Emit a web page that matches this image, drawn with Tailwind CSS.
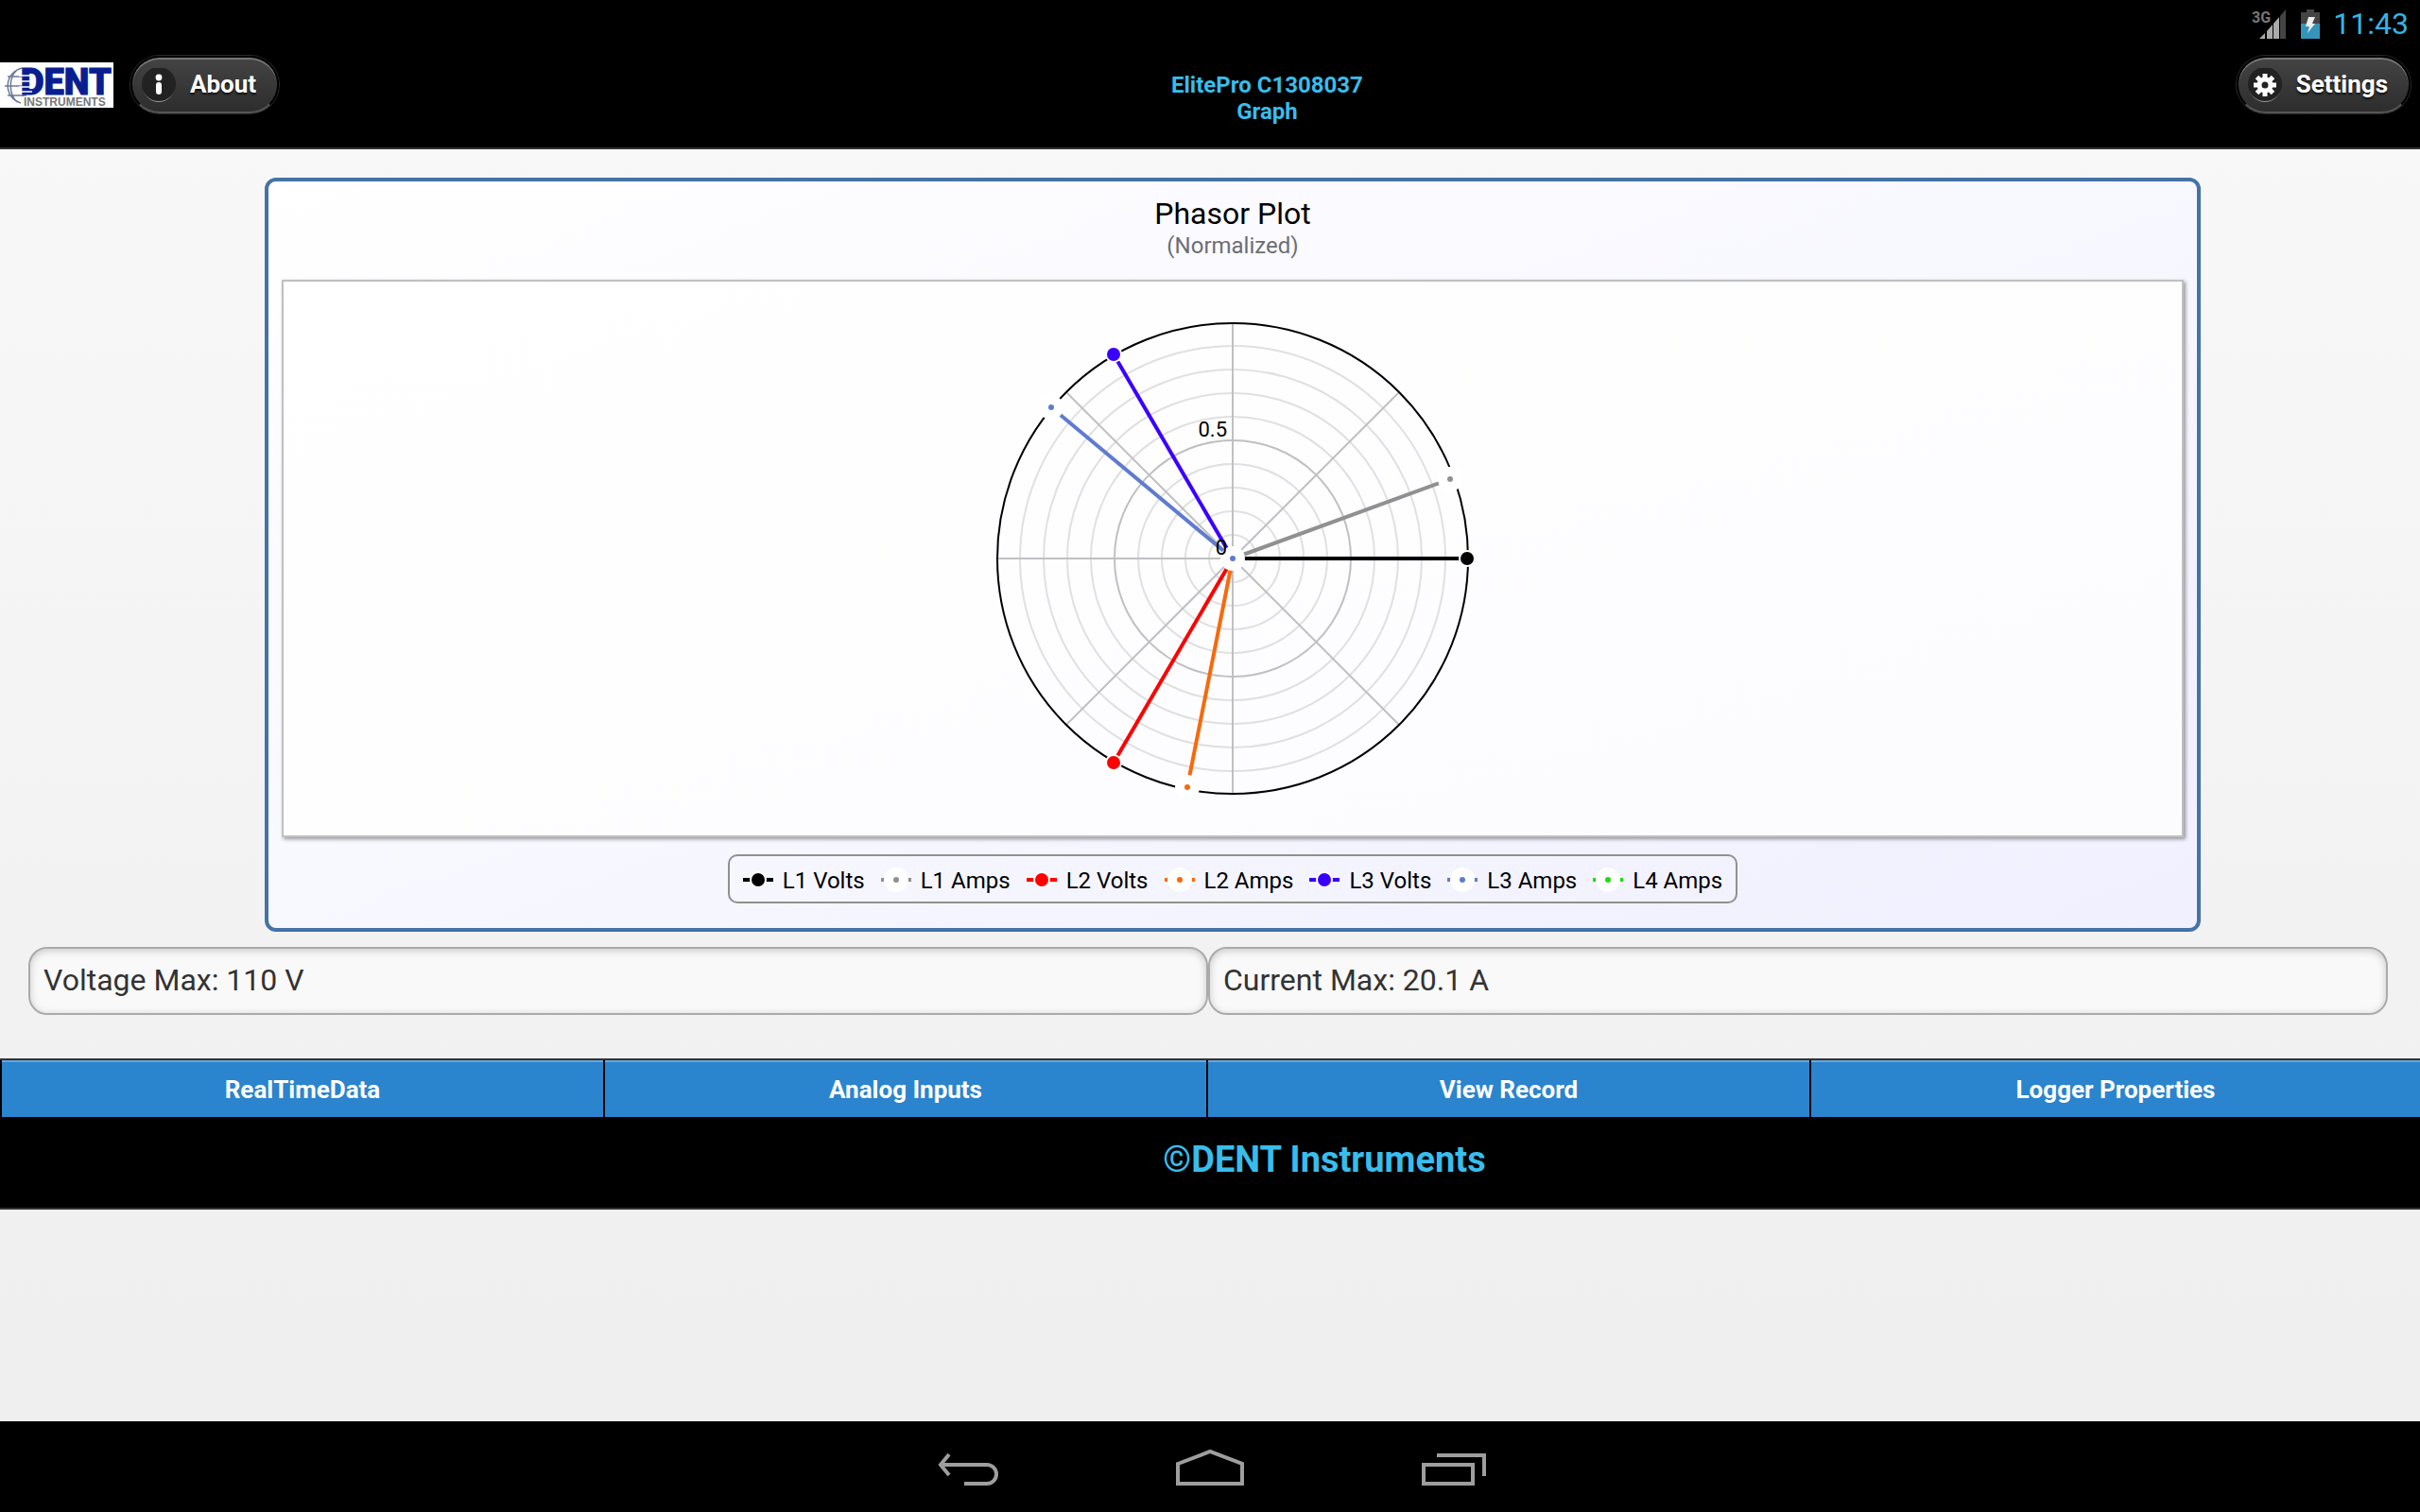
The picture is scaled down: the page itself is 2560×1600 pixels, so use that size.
<!DOCTYPE html>
<html lang="en">
<head>
<meta charset="utf-8">
<title>ElitePro Graph</title>
<script src="https://cdn.jsdelivr.net/npm/@tailwindcss/browser@4"></script>
</head>
<body class="font-[Roboto,sans-serif] bg-[#eee] text-black">
<div class="min-h-screen flex flex-col bg-linear-to-b from-[#f9f9f9] to-[#eee]">

  <!-- Android status bar -->
  <div class="h-[50px] bg-black flex items-center justify-end gap-[14px] pr-3">
    <svg class="w-[38px] h-8" viewBox="0 0 38 32" aria-hidden="true">
      <text x="0" y="15" font-size="16" font-weight="700" fill="#777">3G</text>
      <path d="M8 32 14 26V32Z M16 24 22 17V32H16Z M23 16 29 9V32H23Z" fill="#aaa"/>
      <path d="M30 8 36 1V32H30Z" fill="#444"/>
    </svg>
    <svg class="w-5 h-8" viewBox="0 0 20 32" aria-hidden="true">
      <path d="M6 1H14V4H20V16H0V4H6Z" fill="#444"/>
      <path d="M0 16H20V32H0Z" fill="#3494bc"/>
      <path d="M8 9H15L12 16H15L7 26L9 19H5Z" fill="#eee"/>
    </svg>
    <span class="text-[32px] leading-[50px] text-[#33b5e5]">11:43</span>
  </div>

  <!-- Page header -->
  <header class="h-[108px] bg-black border-b-2 border-[#333] flex items-start pt-[9px] pr-[10px] text-[26px] font-bold">
    <svg class="w-[120px] h-12 my-[7px] mr-[18px] bg-white" viewBox="0 0 120 48" role="img" aria-label="DENT Instruments">
      <g fill="none" stroke="#6c7a99" stroke-width="1.5">
        <path d="M24 6A19 19 0 0 0 22 43 M18 8C9 16 9 33 18 42 M24 6V36 M5 25H28 M8 15H28 M8 35H28"/>
      </g>
      <text x="22" y="34" font-size="38" font-weight="900" fill="#0a1f8f" stroke="#0a1f8f" stroke-width="1">DENT</text>
      <path d="M20 14H34 M20 20H32 M20 26H32 M20 31H34" stroke="#fff" stroke-width="1.5"/>
      <text x="25" y="46" font-family="Liberation Sans" font-size="12" fill="#777">INSTRUMENTS</text>
    </svg>
    <button type="button" class="h-[61px] rounded-full border-2 border-black border-b-[#555] bg-linear-to-b from-[#444] to-[#2d2d2d] shadow-[inset_0_2px_0_#777,0_0_0_1px_#2a2a2a] text-white flex items-center gap-[15px] pl-[10px] pr-[22px] text-shadow-[0_2px_2px_#111]">
      <svg class="size-9" viewBox="0 0 36 36" aria-hidden="true">
        <circle cx="18" cy="19" r="17" fill="#999"/><circle cx="18" cy="17" r="18" fill="#222"/>
        <circle cx="18" cy="10" r="3.4" fill="#fff"/><rect x="15" y="15" width="6" height="13" rx="3" fill="#fff"/>
      </svg>
      About
    </button>
    <h1 class="flex-1 pt-[17px] pl-5 text-center text-[24px] leading-7 text-[#38bdec]">ElitePro C1308037<br>Graph</h1>
    <button type="button" class="h-[61px] rounded-full border-2 border-black border-b-[#555] bg-linear-to-b from-[#444] to-[#2d2d2d] shadow-[inset_0_2px_0_#777,0_0_0_1px_#2a2a2a] text-white flex items-center gap-[15px] pl-[10px] pr-[22px] text-shadow-[0_2px_2px_#111]">
      <svg class="size-9" viewBox="0 0 36 36" aria-hidden="true">
        <circle cx="18" cy="19" r="17" fill="#999"/><circle cx="18" cy="17" r="18" fill="#222"/>
        <g stroke="#fff" stroke-width="5"><path d="M18 6V30 M6 18H30 M9.500 9.500 26.500 26.500 M26.500 9.500 9.500 26.500"/></g>
        <circle cx="18" cy="18" r="8.500" fill="#fff"/><circle cx="18" cy="18" r="3.500" fill="#222"/>
      </svg>
      Settings
    </button>
  </header>

  <main>
    <!-- Phasor chart -->
    <section class="pl-[280px] pr-[232px] pt-[30px]">
      <figure class="border-4 border-[#4572a7] rounded-xl bg-linear-to-br from-white to-[#f0f0ff] px-[14px] pt-4 pb-[26px] text-center">
        <h2 class="text-[32px] leading-9">Phasor Plot</h2>
        <p class="text-[24px] leading-8 text-[#6d6d75] mb-5">(Normalized)</p>
        <div class="h-[590px] border-2 border-[#c0c0c0] bg-linear-to-br from-white to-[#fcfcff] shadow-[2px_2px_4px_#0006] flex items-center justify-center">
          <svg class="size-[520px]" viewBox="-260 -260 520 520" role="img" aria-label="Phasor plot">
            <g id="grid" fill="none" stroke-width="2"></g>
            <g id="series"></g>
            <g font-size="22" text-anchor="end">
              <text x="-6" y="-129">0.5</text>
              <text x="-6" y="-4">0</text>
            </g>
          </svg>
        </div>
        <figcaption class="mt-[18px] flex justify-center">
          <ul id="legend" class="h-[52px] border-2 border-[#909090] rounded-[10px] px-[14px] flex items-center gap-[17px] text-[24px]"></ul>
        </figcaption>
      </figure>
    </section>

    <!-- Scale readouts -->
    <section class="grid grid-cols-2 pl-[30px] pr-[34px] pt-4 pb-[46px] text-[32px]">
      <input type="text" readonly aria-label="Voltage maximum" value="Voltage Max: 110 V" class="h-18 w-full rounded-[20px] border-2 border-[#aaa] bg-[#f9f9f9] shadow-[inset_0_2px_8px_#0003] px-[14px] pb-[2px] text-[#333]">
      <input type="text" readonly aria-label="Current maximum" value="Current Max: 20.1 A" class="h-18 w-full rounded-[20px] border-2 border-[#aaa] bg-[#f9f9f9] shadow-[inset_0_2px_8px_#0003] px-[14px] pb-[2px] text-[#333]">
    </section>
  </main>

  <footer class="bg-black border-b-2 border-[#333]">
    <nav class="grid grid-cols-[638fr_638fr_638fr_646fr] border-t-2 border-[#333] text-[26px] font-bold text-white text-center leading-[58px]">
      <a href="#realtime" class="border-l-2 border-l-black bg-[#2b84ce] shadow-[inset_0_2px_0_#68a7d8] h-15 pt-[2px]">RealTimeData</a>
      <a href="#analog" class="border-l-2 border-l-black bg-[#2b84ce] shadow-[inset_0_2px_0_#68a7d8] h-15 pt-[2px]">Analog Inputs</a>
      <a href="#record" class="border-l-2 border-l-black bg-[#2b84ce] shadow-[inset_0_2px_0_#68a7d8] h-15 pt-[2px]">View Record</a>
      <a href="#logger" class="border-l-2 border-l-black bg-[#2b84ce] shadow-[inset_0_2px_0_#68a7d8] h-15 pt-[2px]">Logger Properties</a>
    </nav>
    <p class="h-24 pl-[242px] text-center text-[38px] leading-[90px] font-bold text-[#38bdec]">©DENT Instruments</p>
  </footer>

  <!-- Android navigation bar -->
  <div class="mt-auto h-24 pl-[2px] bg-black flex items-center justify-center gap-[188px]">
    <button type="button" aria-label="Back"><svg class="w-[66px] h-10" viewBox="0 0 66 40" fill="none" stroke="#9e9e9e" stroke-width="4"><path d="M14 7 5 18 14 29 M5 18H54A10 10 0 0 1 54 38H30"/></svg></button>
    <button type="button" aria-label="Home"><svg class="w-[72px] h-10" viewBox="0 0 72 40" fill="none" stroke="#9e9e9e" stroke-width="4"><path d="M2 17 36 4 70 17V38H2Z"/></svg></button>
    <button type="button" aria-label="Recent apps"><svg class="w-[68px] h-10" viewBox="0 0 68 40" fill="none" stroke="#9e9e9e" stroke-width="4"><path d="M2 18H54V38H2Z M16 8H66V30"/></svg></button>
  </div>
</div>

<script>
  const series = [
    { name: 'L1 Volts', color: '#000', x: 248, y: 0 },
    { name: 'L1 Amps', color: '#909090', x: 230, y: -84 },
    { name: 'L2 Volts', color: '#ff0000', x: -126, y: 216 },
    { name: 'L2 Amps', color: '#f8690b', x: -48, y: 242 },
    { name: 'L3 Volts', color: '#3a00ff', x: -126, y: -216 },
    { name: 'L3 Amps', color: '#5f7bd0', x: -192, y: -160 },
    { name: 'L4 Amps', color: '#1fdc10' }
  ];
  const isVolts = s => s.name.endsWith('Volts');

  // Rings every 0.1, spokes every 45 degrees
  let grid = '';
  for (let i = 1; i <= 9; i++) grid += `<circle r="${i * 25}" stroke="${i === 5 ? '#c0c0c0' : '#e0e0e0'}"/>`;
  for (let a = 0; a < 360; a += 45) grid += `<path d="M0 0H249" stroke="#c0c0c0" transform="rotate(${a})"/>`;
  grid += '<circle r="249" stroke="#000"/>';
  document.getElementById('grid').innerHTML = grid;

  // Marker: halo in the background colour with a dot over it
  const marker = (s, x, y) => isVolts(s)
    ? `<circle cx="${x}" cy="${y}" r="9" fill="#fff"/><circle cx="${x}" cy="${y}" r="7" fill="${s.color}"/>`
    : `<circle cx="${x}" cy="${y}" r="13" fill="#fff"/><circle cx="${x}" cy="${y}" r="3" fill="${s.color}"/>`;

  const plotted = series.filter(s => s.x !== undefined);
  document.getElementById('series').innerHTML =
    plotted.map(s => `<path d="M0 0L${s.x} ${s.y}" stroke="${s.color}" stroke-width="4"/>`).join('') +
    plotted.map(s => marker(s, s.x, s.y)).join('') +
    marker(plotted[5], 0, 0);

  document.getElementById('legend').innerHTML = series.map(s =>
    `<li class="flex items-center gap-[10px]"><svg class="w-8 h-7" viewBox="0 -1 32 28" aria-hidden="true">` +
    `<path d="M0 14H32" stroke="${s.color}" stroke-width="4"/>${marker(s, 16, 14)}</svg><span class="pt-[3px]">${s.name}</span></li>`).join('');
</script>
</body>
</html>
